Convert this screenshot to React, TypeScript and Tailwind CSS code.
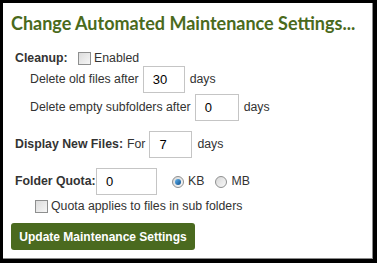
import { useState } from "react";

function Checkbox({ checked = false }: { checked?: boolean }) {
  return (
    <span className="inline-flex h-[13px] w-[13px] shrink-0 items-center justify-center border border-[#8e8f8f] bg-gradient-to-br from-[#dcdcdc] to-[#f6f6f6]">
      {checked && <span className="h-[5px] w-[5px] bg-[#333]" />}
    </span>
  );
}

function Radio({ checked = false }: { checked?: boolean }) {
  return (
    <span className="inline-flex h-[12px] w-[12px] shrink-0 items-center justify-center rounded-full border border-[#8e8f8f] bg-gradient-to-br from-[#d8d8d8] to-[#f8f8f8]">
      {checked && <span className="h-[6px] w-[6px] rounded-full bg-gradient-to-br from-[#5fb4f0] to-[#0b4f8c]" />}
    </span>
  );
}

function Field({ value, width }: { value: string; width: string }) {
  return (
    <span className={`inline-flex h-[27px] shrink-0 items-center border border-[#c5c5c5] bg-white pl-[9px] text-[13px] text-black ${width}`}>
      {value}
    </span>
  );
}

export default function App() {
  const [unit] = useState("KB");

  return (
    <div className="h-[263px] w-[377px] overflow-hidden bg-black pl-[3px] pt-[3px] font-['Liberation_Sans',Arial,sans-serif] text-[12.3px] text-[#333]">
      <div className="h-[256px] w-[370px] border-b border-r border-[#8a8a8a] bg-white pl-[8px] pt-[10px]">
        <h1 className="whitespace-nowrap font-['Lato',sans-serif] text-[18px] font-bold leading-[20px] text-[#4a6a1c]">
          Change Automated Maintenance Settings...
        </h1>

        <div className="mt-[17px] flex h-[16px] items-center whitespace-nowrap">
          <span className="w-[67px] pl-[4px] font-bold">Cleanup:</span>
          <Checkbox />
          <span className="ml-[3px]">Enabled</span>
        </div>

        <div className="flex h-[27px] items-center whitespace-nowrap pl-[19px]">
          <span>Delete old files after</span>
          <span className="ml-[4px]">
            <Field value="30" width="w-[42px]" />
          </span>
          <span className="ml-[5px]">days</span>
        </div>

        <div className="mt-[1px] flex h-[27px] items-center whitespace-nowrap pl-[19px]">
          <span>Delete empty subfolders after</span>
          <span className="ml-[4px]">
            <Field value="0" width="w-[44px]" />
          </span>
          <span className="ml-[5px]">days</span>
        </div>

        <div className="mt-[10px] flex h-[27px] items-center whitespace-nowrap pl-[4px]">
          <span className="font-bold">Display New Files:</span>
          <span className="ml-[4px]">For</span>
          <span className="ml-[4px]">
            <Field value="7" width="w-[43px]" />
          </span>
          <span className="ml-[5px]">days</span>
        </div>

        <div className="mt-[10px] flex h-[27px] items-center whitespace-nowrap pl-[4px]">
          <span className="w-[81px] font-bold">Folder Quota:</span>
          <Field value="0" width="w-[61px]" />
          <span className="ml-[15px] inline-flex items-center gap-[4px]">
            <Radio checked={unit === "KB"} />
            <span>KB</span>
          </span>
          <span className="ml-[11px] inline-flex items-center gap-[4px]">
            <Radio checked={unit === "MB"} />
            <span>MB</span>
          </span>
        </div>

        <div className="mt-[3px] flex h-[16px] items-center whitespace-nowrap pl-[24px]">
          <Checkbox />
          <span className="ml-[3px]">Quota applies to files in sub folders</span>
        </div>

        <button className="mt-[9px] h-[27px] w-[184px] whitespace-nowrap rounded-[3px] bg-[#4a6a1f] text-[12px] font-bold text-white">
          Update Maintenance Settings
        </button>
      </div>
    </div>
  );
}
